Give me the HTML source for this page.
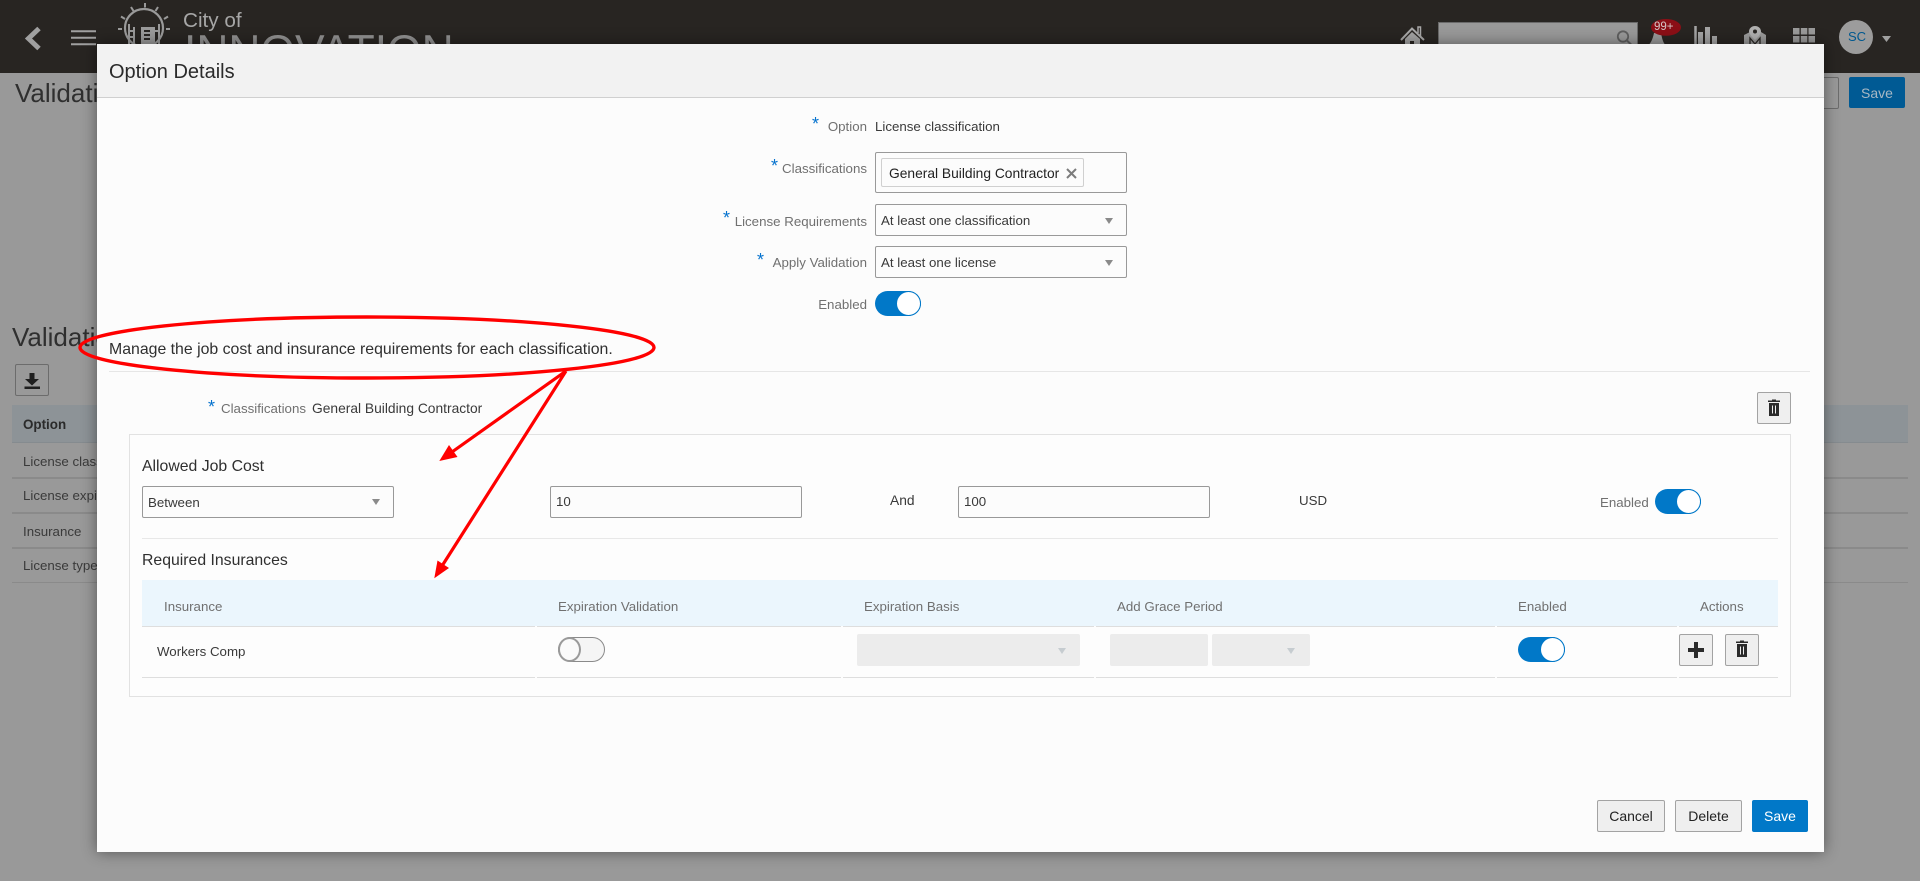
<!DOCTYPE html>
<html lang="en">
<head>
<meta charset="utf-8">
<title>Option Details</title>
<style>
html,body{margin:0;padding:0;width:1920px;height:881px;overflow:hidden;background:#999;font-family:"Liberation Sans",sans-serif}
#p{position:relative;width:1920px;height:881px;overflow:hidden;background:#999}
.a,.t,.r{position:absolute}
.t,.r{white-space:nowrap;line-height:20px;font-size:13.3px;color:#3a3a3a}
.l{color:#707070}
.st{color:#0572ce;font-size:18px}
.f{position:absolute;box-sizing:border-box;border:1px solid #999;border-radius:2px;background:#fcfcfc}
.arr{position:absolute;width:0;height:0;border-left:4.5px solid transparent;border-right:4.5px solid transparent;border-top:6.5px solid #8a8a8a}
.b{position:absolute;box-sizing:border-box;border:1px solid #a3a3a3;border-radius:2px;background:#efefef;text-align:center;color:#222;font-size:14px;line-height:30px}
.tg{position:absolute;box-sizing:border-box;width:46px;height:25px;border-radius:13px;background:#0178c8}
.tg i{position:absolute;right:0;top:0;width:25px;height:25px;box-sizing:border-box;border-radius:50%;background:#fff;border:1px solid #0178c8;display:block}
.dis{position:absolute;background:#ececec;border-radius:2px}
.rowb{position:absolute;height:1px;background:#dedede}
</style>
</head>
<body>
<div id="p">
  <!-- top bar -->
  <div class="a" style="left:0;top:0;width:1920px;height:73px;background:#282522"></div>
  <svg class="a" style="left:0;top:0" width="1920" height="73" viewBox="0 0 1920 73" fill="none">
    <path d="M39 28.500 L28.500 38.500 L39 48.500" stroke="#a0a0a0" stroke-width="5"/>
    <path d="M71 31.200H96M71 37.800H96M71 44.300H96" stroke="#a0a0a0" stroke-width="2"/>
    <g stroke="#9a9a9a" stroke-width="2">
      <circle cx="144" cy="28" r="19" stroke-width="2.200"/>
      <path d="M145 3V7.500M131 7L133.500 11M158 7L155.500 11M121 16.500L125 19M168 16.500L164 19M118 29H122M166 29H170"/>
      <path d="M129 24V46M134 27V46M129 31H134M129 37H134M154 27V46M159 24V46M154 31H159"/>
      <rect x="141" y="27" width="12" height="20" fill="#9a9a9a" stroke="none"/>
      <path d="M144 31H150M144 35H150M144 39H150" stroke="#282522"/>
    </g>
    <path d="M1401 40L1412 28.500L1424 40" stroke="#a8a8a8" stroke-width="2"/>
    <path d="M1418 33V27H1420.500V36" stroke="#a8a8a8" stroke-width="1.500"/>
    <path d="M1405 39L1412 32L1420 39V50H1405Z" fill="#a4a4a4"/>
    <rect x="1410" y="41" width="4" height="9" fill="#282522"/>
    <rect x="1438.500" y="22.500" width="199" height="30" fill="#999" stroke="#6a6a6a"/>
    <circle cx="1623" cy="36.500" r="5.200" stroke="#5f5f5f" stroke-width="1.800"/>
    <path d="M1627 40.500L1632 45.500" stroke="#5f5f5f" stroke-width="2"/>
    <path d="M1647 46C1651 44 1653 38 1654 33L1661 33C1662 38 1663 44 1667 46Z" fill="#999"/>
    <ellipse cx="1666" cy="27.400" rx="15" ry="8.400" fill="#8b0f16"/>
    <path d="M1695.500 26V46" stroke="#a4a4a4" stroke-width="2.500"/>
    <path d="M1700.500 32V46M1707.500 27V46M1714.500 36V46" stroke="#a4a4a4" stroke-width="5"/>
    <path d="M1744 35L1750 32L1761 32L1766 35V48H1744Z" fill="#9a9a9a"/>
    <path d="M1755 26C1751 26 1749 29 1749 31.500C1749 34.500 1755 40 1755 40C1755 40 1761 34.500 1761 31.500C1761 29 1759 26 1755 26Z" fill="#b0b0b0"/>
    <circle cx="1755" cy="31.500" r="2" fill="#282522"/>
    <path d="M1750 46V38L1755 44L1760 38V46" stroke="#282522" stroke-width="1.300"/>
    <g fill="#9a9a9a">
      <rect x="1793" y="28" width="6.500" height="6.500"/><rect x="1800.800" y="28" width="6.500" height="6.500"/><rect x="1808.500" y="28" width="6.500" height="6.500"/>
      <rect x="1793" y="36" width="6.500" height="6.500"/><rect x="1800.800" y="36" width="6.500" height="6.500"/><rect x="1808.500" y="36" width="6.500" height="6.500"/>
      <rect x="1793" y="44" width="6.500" height="6.500"/><rect x="1800.800" y="44" width="6.500" height="6.500"/><rect x="1808.500" y="44" width="6.500" height="6.500"/>
    </g>
    <circle cx="1856" cy="37" r="17" fill="#9c9c9c"/>
    <path d="M1882 36H1891L1886.500 42Z" fill="#a0a0a0"/>
  </svg>
  <div class="t" style="left:183px;top:11px;font-size:20.700px;color:#a6a6a6">City of</div>
  <div class="t" style="left:184px;top:29px;font-size:44.400px;line-height:46px;color:#909090">INNOVATION</div>
  <div class="t" style="left:1654px;top:17px;font-size:11.500px;color:#d5c5c5">99+</div>
  <div class="t" style="left:1848px;top:27px;font-size:13px;color:#00588f">SC</div>

  <!-- background page -->
  <div class="t" style="left:15px;top:83px;font-size:26px;color:#2f2f2f">Validation</div>
  <div class="a" style="left:1750px;top:77px;width:87px;height:30px;border:1px solid #6c6c6c;border-radius:2px"></div>
  <div class="a" style="left:1849px;top:77px;width:56px;height:31px;background:#005a94;border-radius:2px;text-align:center;color:#a8b8c4;font-size:14px;line-height:33px">Save</div>
  <div class="t" style="left:12px;top:327px;font-size:26px;color:#2f2f2f">Validation Rules</div>
  <div class="a" style="left:15px;top:364px;width:32px;height:30px;border:1px solid #6c6c6c;border-radius:2px;background:#999"></div>
  <svg class="a" style="left:15px;top:364px" width="34" height="32" viewBox="0 0 34 32"><path d="M14.500 9H19.500V15H24L17 21.500L10 15H14.500Z M9.500 22.500H25V25H9.500Z" fill="#1f1f1f"/></svg>
  <div class="a" style="left:12px;top:405px;width:1896px;height:38px;background:#8d9397;border-bottom:1px solid #858b8f;box-sizing:border-box"></div>
  <div class="t" style="left:23px;top:415px;font-size:13.400px;font-weight:bold;color:#2a2a2a">Option</div>
  <div class="t" style="left:23px;top:452px;color:#3a3a3a">License classification</div>
  <div class="t" style="left:23px;top:486px;color:#3a3a3a">License expiration</div>
  <div class="t" style="left:23px;top:522px;color:#3a3a3a">Insurance</div>
  <div class="t" style="left:23px;top:556px;color:#3a3a3a">License type</div>
  <div class="a" style="left:12px;top:477px;width:1896px;height:2px;background:#8a8a8a"></div>
  <div class="a" style="left:12px;top:512px;width:1896px;height:2px;background:#8a8a8a"></div>
  <div class="a" style="left:12px;top:547px;width:1896px;height:2px;background:#8a8a8a"></div>
  <div class="a" style="left:12px;top:582px;width:1896px;height:1px;background:#8a8a8a"></div>

  <!-- dialog -->
  <div class="a" style="left:97px;top:44px;width:1727px;height:808px;background:#fcfcfc;box-shadow:0 0 14px rgba(0,0,0,.45)"></div>
  <div class="a" style="left:97px;top:44px;width:1727px;height:53px;background:#f2f2f2;border-bottom:1px solid #d0d0d0"></div>
  <div class="t" style="left:109px;top:62px;font-size:20px;color:#2a2a2a">Option Details</div>

  <div class="t st" style="left:812px;top:114px">*</div>
  <div class="r l" style="right:1053px;top:117px">Option</div>
  <div class="t" style="left:875px;top:117px">License classification</div>

  <div class="t st" style="left:771px;top:156px">*</div>
  <div class="r l" style="right:1053px;top:159px">Classifications</div>
  <div class="f" style="left:875px;top:152px;width:252px;height:41px"></div>
  <div class="a" style="left:881px;top:158px;width:203px;height:29px;box-sizing:border-box;border:1px solid #d0d0d0;border-radius:2px;background:#fcfcfc"></div>
  <div class="t" style="left:889px;top:164px;font-size:13.800px;color:#222">General Building Contractor</div>
  <svg class="a" style="left:1066px;top:168px" width="11" height="11" viewBox="0 0 11 11"><path d="M1 1L10 10M10 1L1 10" stroke="#7c7c7c" stroke-width="2"/></svg>

  <div class="t st" style="left:723px;top:208px">*</div>
  <div class="r l" style="right:1053px;top:212px">License Requirements</div>
  <div class="f" style="left:875px;top:204px;width:252px;height:32px"></div>
  <div class="t" style="left:881px;top:211px">At least one classification</div>
  <div class="arr" style="left:1105px;top:218px"></div>

  <div class="t st" style="left:757px;top:250px">*</div>
  <div class="r l" style="right:1053px;top:253px">Apply Validation</div>
  <div class="f" style="left:875px;top:246px;width:252px;height:32px"></div>
  <div class="t" style="left:881px;top:253px">At least one license</div>
  <div class="arr" style="left:1105px;top:260px"></div>

  <div class="r l" style="right:1053px;top:295px">Enabled</div>
  <div class="tg" style="left:875px;top:291px"><i></i></div>

  <div class="t" style="left:109px;top:340px;font-size:15.850px;color:#2f2f2f">Manage the job cost and insurance requirements for each classification.</div>
  <div class="a" style="left:109px;top:371px;width:1701px;height:1px;background:#e6e6e6"></div>

  <div class="t st" style="left:208px;top:397px">*</div>
  <div class="t l" style="left:221px;top:399px;font-size:13.300px">Classifications</div>
  <div class="t" style="left:312px;top:399px;font-size:13.800px">General Building Contractor</div>
  <div class="b" style="left:1757px;top:392px;width:34px;height:32px"></div>
  <svg class="a" style="left:1757px;top:392px" width="34" height="32" viewBox="0 0 34 32" fill="#2b2b2b"><path d="M15 8.500V7.500H19V8.500H23V10H11V8.500Z"/><path fill-rule="evenodd" d="M12 11H22V24H12ZM15 13.500V21.500H16V13.500ZM18 13.500V21.500H19V13.500Z"/></svg>

  <!-- box -->
  <div class="a" style="left:129px;top:434px;width:1662px;height:263px;box-sizing:border-box;border:1.500px solid #e2e2e2;background:#fdfdfd"></div>
  <div class="t" style="left:142px;top:457px;font-size:15.800px;color:#2f2f2f">Allowed Job Cost</div>
  <div class="f" style="left:142px;top:486px;width:252px;height:32px"></div>
  <div class="t" style="left:148px;top:493px">Between</div>
  <div class="arr" style="left:372px;top:499px"></div>
  <div class="f" style="left:550px;top:486px;width:252px;height:32px"></div>
  <div class="t" style="left:556px;top:492px">10</div>
  <div class="t" style="left:890px;top:491px;font-size:13.800px">And</div>
  <div class="f" style="left:958px;top:486px;width:252px;height:32px"></div>
  <div class="t" style="left:964px;top:492px">100</div>
  <div class="t" style="left:1299px;top:491px">USD</div>
  <div class="t l" style="left:1600px;top:493px">Enabled</div>
  <div class="tg" style="left:1655px;top:489px"><i></i></div>
  <div class="a" style="left:142px;top:538px;width:1636px;height:1px;background:#e8e8e8"></div>

  <div class="t" style="left:142px;top:551px;font-size:15.800px;color:#2f2f2f">Required Insurances</div>
  <div class="a" style="left:142px;top:580px;width:1636px;height:46px;background:#ebf6fd"></div>
  <div class="t l" style="left:164px;top:597px">Insurance</div>
  <div class="t l" style="left:558px;top:597px">Expiration Validation</div>
  <div class="t l" style="left:864px;top:597px">Expiration Basis</div>
  <div class="t l" style="left:1117px;top:597px">Add Grace Period</div>
  <div class="t l" style="left:1518px;top:597px">Enabled</div>
  <div class="t l" style="left:1700px;top:597px">Actions</div>
  <div class="rowb" style="left:142px;top:626px;width:393px"></div>
  <div class="rowb" style="left:537px;top:626px;width:304px"></div>
  <div class="rowb" style="left:843px;top:626px;width:251px"></div>
  <div class="rowb" style="left:1096px;top:626px;width:399px"></div>
  <div class="rowb" style="left:1497px;top:626px;width:180px"></div>
  <div class="rowb" style="left:1679px;top:626px;width:99px"></div>
  <div class="rowb" style="left:142px;top:677px;width:393px"></div>
  <div class="rowb" style="left:537px;top:677px;width:304px"></div>
  <div class="rowb" style="left:843px;top:677px;width:251px"></div>
  <div class="rowb" style="left:1096px;top:677px;width:399px"></div>
  <div class="rowb" style="left:1497px;top:677px;width:180px"></div>
  <div class="rowb" style="left:1679px;top:677px;width:99px"></div>

  <div class="t" style="left:157px;top:642px">Workers Comp</div>
  <div class="a" style="left:558px;top:637px;width:47px;height:25px;box-sizing:border-box;border:1px solid #8a8a8a;border-radius:13px;background:#f5f5f5"></div>
  <div class="a" style="left:558px;top:637px;width:23px;height:25px;box-sizing:border-box;border:2px solid #9a9a9a;border-radius:50%;background:#fafafa"></div>
  <div class="dis" style="left:857px;top:634px;width:223px;height:32px"></div>
  <div class="arr" style="left:1058px;top:648px;border-top-color:#c6ccd0"></div>
  <div class="dis" style="left:1110px;top:634px;width:98px;height:32px"></div>
  <div class="dis" style="left:1212px;top:634px;width:98px;height:32px"></div>
  <div class="arr" style="left:1287px;top:648px;border-top-color:#c6ccd0"></div>
  <div class="tg" style="left:1518px;top:637px;width:47px"><i></i></div>

  <div class="b" style="left:1679px;top:634px;width:34px;height:32px"></div>
  <svg class="a" style="left:1679px;top:634px" width="34" height="32" viewBox="0 0 34 32"><path d="M15 8H19V14H25V18H19V24H15V18H9V14H15Z" fill="#2b2b2b"/></svg>
  <div class="b" style="left:1725px;top:634px;width:34px;height:32px"></div>
  <svg class="a" style="left:1725px;top:634px" width="34" height="32" viewBox="0 0 34 32" fill="#2b2b2b"><path d="M15 7.500V6.500H19V7.500H23V9H11V7.500Z"/><path fill-rule="evenodd" d="M12 10H22V23H12ZM15 12.500V20.500H16V12.500ZM18 12.500V20.500H19V12.500Z"/></svg>

  <div class="b" style="left:1597px;top:800px;width:68px;height:32px">Cancel</div>
  <div class="b" style="left:1675px;top:800px;width:67px;height:32px">Delete</div>
  <div class="a" style="left:1752px;top:800px;width:56px;height:32px;background:#0178c8;border-radius:2px;text-align:center;color:#fff;font-size:14px;line-height:32px">Save</div>

  <!-- annotation -->
  <svg class="a" style="left:0;top:0" width="1920" height="881" viewBox="0 0 1920 881" fill="none">
    <ellipse cx="367" cy="347.500" rx="287" ry="30.500" stroke="#f00" stroke-width="3.400"/>
    <path d="M566 371L452 452M566 371L442 566" stroke="#f00" stroke-width="3.200"/>
    <path d="M439.300 461L449 445L457.500 457Z" fill="#f00"/>
    <path d="M434.300 578.300L437.500 560.500L449 568Z" fill="#f00"/>
  </svg>
</div>
</body>
</html>
